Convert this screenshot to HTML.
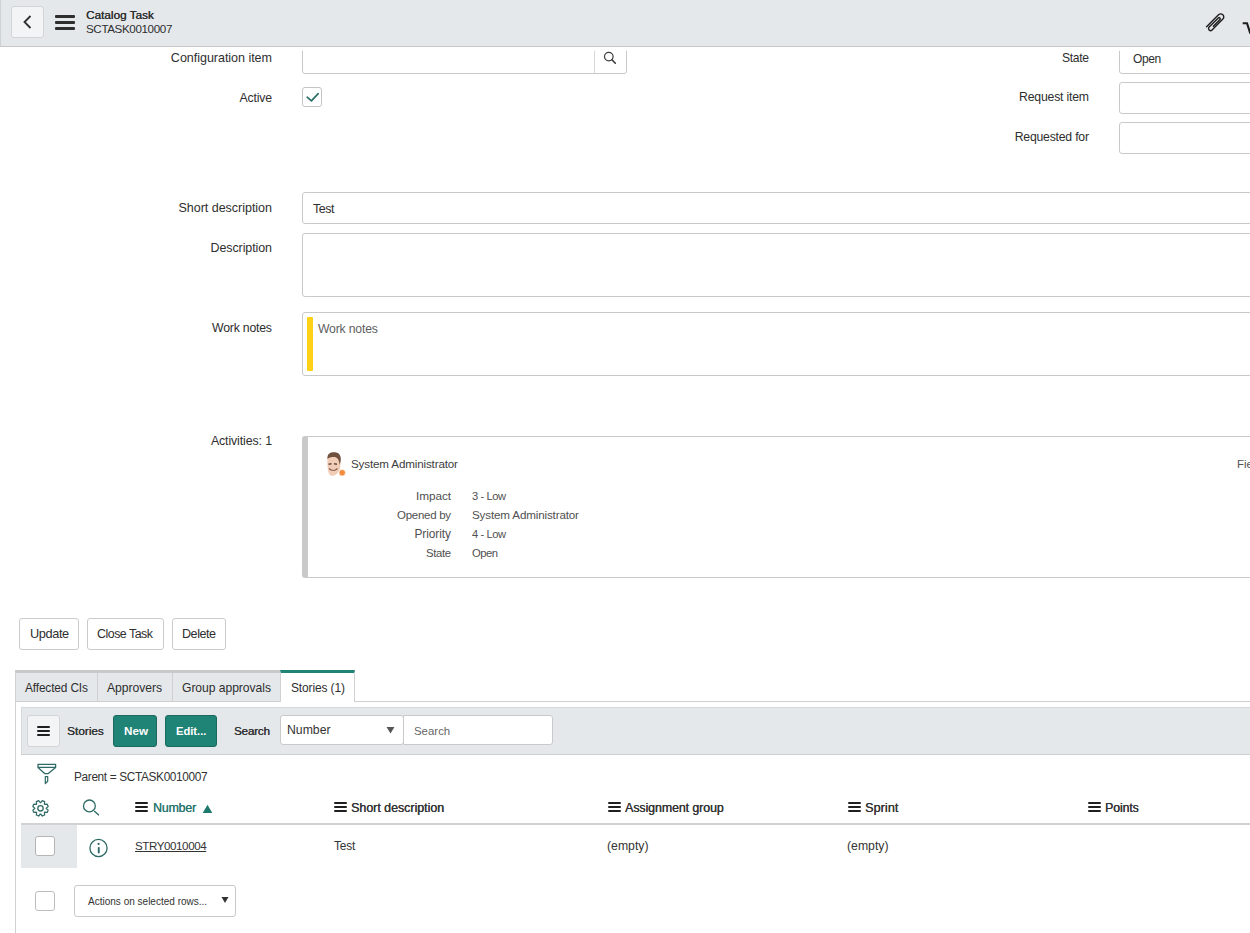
<!DOCTYPE html>
<html><head><meta charset="utf-8">
<style>
*{box-sizing:border-box;margin:0;padding:0}
html,body{width:1250px;height:933px;overflow:hidden;background:#fff;font-family:"Liberation Sans",sans-serif;color:#2e2e2e}
.a{position:absolute}
.t{position:absolute;white-space:nowrap;line-height:1}
.box{position:absolute;border:1px solid #c9c9c9;border-radius:3px;background:#fff}
.bar{position:absolute;background:#1f1f1f}
</style></head><body>
<div class="box" style="left:302px;top:41px;width:325px;height:33px;"></div>
<div class="a" style="left:594px;top:41px;width:1px;height:32px;background:#d6d6d6;"></div>
<svg class="a" style="left:600px;top:48px" width="20" height="20" viewBox="0 0 20 20"><circle cx="8.8" cy="8.6" r="4.3" fill="none" stroke="#3a3a3a" stroke-width="1.2"/><path d="M11.9 11.8 L15.3 15.2" stroke="#3a3a3a" stroke-width="1.6" stroke-linecap="round"/></svg>
<div class="t" style="top:52px;font-size:12.56px;color:#2e2e2e;letter-spacing:-0.04px;right:978.04px;text-align:right;">Configuration item</div>
<div class="box" style="left:302px;top:87px;width:20px;height:20px;border-color:#c4c4c4"></div>
<svg class="a" style="left:302px;top:87px" width="20" height="20" viewBox="0 0 20 20"><path d="M5.2 10.2 L9.4 13.9 L16.2 6.7" fill="none" stroke="#2d6e66" stroke-width="1.7" stroke-linecap="round" stroke-linejoin="round"/></svg>
<div class="t" style="top:92px;font-size:12.27px;color:#2e2e2e;letter-spacing:-0.20px;right:978.20px;text-align:right;">Active</div>
<div class="box" style="left:1119px;top:41px;width:140px;height:33px;"></div>
<div class="t" style="top:53px;font-size:12.01px;color:#2e2e2e;letter-spacing:-0.40px;left:1133px;">Open</div>
<div class="t" style="top:52px;font-size:12.10px;color:#2e2e2e;letter-spacing:-0.31px;right:161.31px;text-align:right;">State</div>
<div class="box" style="left:1119px;top:82px;width:140px;height:32px;"></div>
<div class="t" style="top:91px;font-size:12.26px;color:#2e2e2e;letter-spacing:-0.20px;right:161.20px;text-align:right;">Request item</div>
<div class="box" style="left:1119px;top:122px;width:140px;height:32px;"></div>
<div class="t" style="top:131px;font-size:12.24px;color:#2e2e2e;letter-spacing:-0.21px;right:161.21px;text-align:right;">Requested for</div>
<div class="box" style="left:302px;top:192px;width:960px;height:32px;"></div>
<div class="t" style="top:203px;font-size:12.40px;color:#2e2e2e;left:313px;letter-spacing:-0.4px;">Test</div>
<div class="t" style="top:202px;font-size:12.56px;color:#2e2e2e;letter-spacing:-0.04px;right:978.04px;text-align:right;">Short description</div>
<div class="box" style="left:302px;top:233px;width:960px;height:64px;"></div>
<div class="t" style="top:242px;font-size:12.46px;color:#2e2e2e;letter-spacing:-0.09px;right:978.09px;text-align:right;">Description</div>
<div class="box" style="left:302px;top:312px;width:960px;height:64px;"></div>
<div class="a" style="left:307px;top:317px;width:6px;height:54px;background:#fcd116;border-radius:1px"></div>
<div class="t" style="top:323px;font-size:12.20px;color:#5e5e5e;letter-spacing:-0.17px;left:318px;">Work notes</div>
<div class="t" style="top:322px;font-size:12.27px;color:#2e2e2e;letter-spacing:-0.20px;right:978.20px;text-align:right;">Work notes</div>
<div class="t" style="top:435px;font-size:12.36px;color:#2e2e2e;letter-spacing:-0.12px;right:978.12px;text-align:right;">Activities: 1</div>
<div class="box" style="left:302px;top:436px;width:960px;height:142px;border-left:6px solid #c9c9c9"></div>
<svg class="a" style="left:318px;top:448px" width="32" height="32" viewBox="0 0 32 32">
<path d="M9.5 10 C10 4.5 20 3 22.5 9 L22.5 16 C22.5 24 18 28.2 13.5 27.8 C10 27.3 9 20 9.5 10 Z" fill="#f1cdb8"/>
<path d="M9.5 11 C9 5 13 3.8 17 4.2 C21 4.6 23 7 22.8 12 L21.8 17 C21 11 19 9 16 9 C13 9 11 9.5 9.5 11 Z" fill="#6f503e"/>
<path d="M10.5 16.3 L13.5 15.8 M16 15.8 L19 16.2" stroke="#6a4c3c" stroke-width="1.4"/>
<path d="M11 20.5 C13.5 23 17 23 19.5 20.5" fill="none" stroke="#8e5c50" stroke-width="1.3"/>
<circle cx="24.2" cy="24.7" r="3.2" fill="#f58b3c" stroke="#fff" stroke-width="0.6"/>
</svg>
<div class="t" style="top:458px;font-size:11.64px;color:#3d3d3d;letter-spacing:-0.15px;left:351px;">System Administrator</div>
<div class="t" style="top:459px;font-size:11.50px;color:#555;left:1237px;">Fie</div>
<div class="t" style="top:491px;font-size:11.80px;color:#4f4f4f;letter-spacing:-0.08px;right:799.08px;text-align:right;">Impact</div>
<div class="t" style="top:491px;font-size:11.16px;color:#4f4f4f;letter-spacing:-0.43px;left:472px;">3 - Low</div>
<div class="t" style="top:510px;font-size:11.49px;color:#4f4f4f;letter-spacing:-0.28px;right:799.28px;text-align:right;">Opened by</div>
<div class="t" style="top:509px;font-size:11.64px;color:#4f4f4f;letter-spacing:-0.15px;left:472px;">System Administrator</div>
<div class="t" style="top:529px;font-size:11.85px;color:#4f4f4f;letter-spacing:-0.04px;right:799.04px;text-align:right;">Priority</div>
<div class="t" style="top:529px;font-size:11.16px;color:#4f4f4f;letter-spacing:-0.43px;left:472px;">4 - Low</div>
<div class="t" style="top:548px;font-size:11.33px;color:#4f4f4f;letter-spacing:-0.36px;right:799.36px;text-align:right;">State</div>
<div class="t" style="top:548px;font-size:11.29px;color:#4f4f4f;letter-spacing:-0.54px;left:472px;">Open</div>
<div class="box" style="left:19px;top:618px;width:60px;height:32px;border-color:#cbcbcb"></div>
<div class="t" style="top:628px;font-size:12.75px;color:#2e2e2e;letter-spacing:-0.38px;left:30px;">Update</div>
<div class="box" style="left:87px;top:618px;width:77px;height:32px;border-color:#cbcbcb"></div>
<div class="t" style="top:628px;font-size:12.42px;color:#2e2e2e;letter-spacing:-0.49px;left:97px;">Close Task</div>
<div class="box" style="left:172px;top:618px;width:54px;height:32px;border-color:#cbcbcb"></div>
<div class="t" style="top:628px;font-size:12.55px;color:#2e2e2e;letter-spacing:-0.45px;left:182px;">Delete</div>
<div class="a" style="left:15px;top:670px;width:1px;height:263px;background:#d0d0d0;"></div>
<div class="a" style="left:15px;top:670px;width:266px;height:32px;background:#e4e8eb;border-top:3px solid #c9c9c9;border-bottom:1px solid #cfcfcf;border-left:1px solid #d0d0d0"></div>
<div class="a" style="left:97px;top:673px;width:1px;height:28px;background:#d0d0d0;"></div>
<div class="a" style="left:172px;top:673px;width:1px;height:28px;background:#d0d0d0;"></div>
<div class="a" style="left:280px;top:670px;width:75px;height:32px;background:#fff;border-top:3px solid #1f8476;border-left:1px solid #d0d0d0;border-right:1px solid #d0d0d0"></div>
<div class="a" style="left:354px;top:701px;width:896px;height:1px;background:#cfcfcf;"></div>
<div class="t" style="top:683px;font-size:11.91px;color:#2e2e2e;letter-spacing:-0.15px;left:25px;">Affected CIs</div>
<div class="t" style="top:682px;font-size:12.17px;color:#2e2e2e;letter-spacing:-0.03px;left:107px;">Approvers</div>
<div class="t" style="top:682px;font-size:12.13px;color:#2e2e2e;letter-spacing:-0.05px;left:182px;">Group approvals</div>
<div class="t" style="top:683px;font-size:11.97px;color:#2e2e2e;letter-spacing:-0.12px;left:291px;">Stories (1)</div>
<div class="a" style="left:21px;top:707px;width:1240px;height:48px;background:#e4e8eb;border:1px solid #d6d9dc;border-bottom-color:#cdd0d3"></div>
<div class="box" style="left:27px;top:715px;width:33px;height:32px;background:#f3f4f6;border-color:#d2d4d5"></div>
<div class="a" style="left:37px;top:726px;width:13px;height:2px;background:#1f1f1f;border-radius:1px"></div>
<div class="a" style="left:37px;top:730px;width:13px;height:2px;background:#1f1f1f;border-radius:1px"></div>
<div class="a" style="left:37px;top:734px;width:13px;height:2px;background:#1f1f1f;border-radius:1px"></div>
<div class="t" style="top:726px;font-size:11.80px;color:#333;left:67px;text-shadow:0.3px 0 0 #333;">Stories</div>
<div class="a" style="left:113px;top:715px;width:44px;height:32px;background:#1f8476;border:1px solid #19695e;border-radius:3px"></div>
<div class="t" style="top:725px;font-size:11.67px;color:#fff;left:124px;font-weight:bold;">New</div>
<div class="a" style="left:165px;top:715px;width:52px;height:32px;background:#1f8476;border:1px solid #19695e;border-radius:3px"></div>
<div class="t" style="top:726px;font-size:11.17px;color:#fff;left:176px;font-weight:bold;">Edit...</div>
<div class="t" style="top:726px;font-size:11.57px;color:#333;letter-spacing:-0.15px;left:234px;text-shadow:0.3px 0 0 #333;">Search</div>
<div class="box" style="left:280px;top:715px;width:124px;height:30px;"></div>
<div class="t" style="top:724px;font-size:12.26px;color:#333;left:287px;">Number</div>
<svg class="a" style="left:386px;top:726px" width="9" height="8" viewBox="0 0 9 8"><path d="M0.5 1 L8.5 1 L4.5 7.5 Z" fill="#555"/></svg>
<div class="box" style="left:403px;top:715px;width:150px;height:30px;border-radius:0 3px 3px 0"></div>
<div class="t" style="top:726px;font-size:11.43px;color:#666;left:414px;">Search</div>
<svg class="a" style="left:32px;top:758px" width="30" height="30" viewBox="0 0 30 30">
<path d="M6 6.3 H23.6 V9.5 L16.3 15.6 H12.6 L6 9.5 Z M6 9.4 H23.6" fill="none" stroke="#2f6b66" stroke-width="1.3" stroke-linejoin="round"/>
<path d="M13.3 18.6 H15.7 V23.2 L13.3 25.5 Z" fill="none" stroke="#2f6b66" stroke-width="1.2" stroke-linejoin="round"/>
</svg>
<div class="t" style="top:772px;font-size:11.87px;color:#333;letter-spacing:-0.36px;left:74px;">Parent = SCTASK0010007</div>
<svg class="a" style="left:28px;top:796px" width="26" height="26" viewBox="0 0 26 26"><path d="M12.69 6.60 L14.32 4.61 L16.65 5.58 L16.40 8.14 L16.66 8.40 L19.22 8.15 L20.19 10.48 L18.20 12.11 L18.20 12.49 L20.19 14.12 L19.22 16.45 L16.66 16.20 L16.40 16.46 L16.65 19.02 L14.32 19.99 L12.69 18.00 L12.31 18.00 L10.68 19.99 L8.35 19.02 L8.60 16.46 L8.34 16.20 L5.78 16.45 L4.81 14.12 L6.80 12.49 L6.80 12.11 L4.81 10.48 L5.78 8.15 L8.34 8.40 L8.60 8.14 L8.35 5.58 L10.68 4.61 L12.31 6.60 Z" fill="none" stroke="#2f6b66" stroke-width="1.25" stroke-linejoin="round"/><circle cx="12.5" cy="12.3" r="2.7" fill="none" stroke="#2f6b66" stroke-width="1.3"/></svg>
<svg class="a" style="left:80px;top:796px" width="24" height="24" viewBox="0 0 24 24"><circle cx="9.4" cy="9.9" r="5.9" fill="none" stroke="#2f6b66" stroke-width="1.3"/><path d="M14.2 15 L19 19.2" stroke="#2f6b66" stroke-width="1.4"/></svg>
<div class="a" style="left:135px;top:802px;width:13px;height:2px;background:#1f1f1f;border-radius:1px"></div>
<div class="a" style="left:135px;top:806px;width:13px;height:2px;background:#1f1f1f;border-radius:1px"></div>
<div class="a" style="left:135px;top:810px;width:13px;height:2px;background:#1f1f1f;border-radius:1px"></div>
<div class="t" style="top:802px;font-size:12.30px;color:#2a7670;letter-spacing:-0.15px;left:153px;text-shadow:0.3px 0 0 #2a7670;">Number</div>
<svg class="a" style="left:202px;top:804px" width="12" height="10" viewBox="0 0 12 10"><path d="M0.7 9 L10.3 9 L5.5 0.8 Z" fill="#1f7a6e"/></svg>
<div class="a" style="left:334px;top:802px;width:13px;height:2px;background:#1f1f1f;border-radius:1px"></div>
<div class="a" style="left:334px;top:806px;width:13px;height:2px;background:#1f1f1f;border-radius:1px"></div>
<div class="a" style="left:334px;top:810px;width:13px;height:2px;background:#1f1f1f;border-radius:1px"></div>
<div class="t" style="top:802px;font-size:12.45px;color:#333;letter-spacing:-0.02px;left:351px;text-shadow:0.3px 0 0 #333;">Short description</div>
<div class="a" style="left:608px;top:802px;width:13px;height:2px;background:#1f1f1f;border-radius:1px"></div>
<div class="a" style="left:608px;top:806px;width:13px;height:2px;background:#1f1f1f;border-radius:1px"></div>
<div class="a" style="left:608px;top:810px;width:13px;height:2px;background:#1f1f1f;border-radius:1px"></div>
<div class="t" style="top:802px;font-size:12.37px;color:#333;letter-spacing:-0.07px;left:625px;text-shadow:0.3px 0 0 #333;">Assignment group</div>
<div class="a" style="left:848px;top:802px;width:13px;height:2px;background:#1f1f1f;border-radius:1px"></div>
<div class="a" style="left:848px;top:806px;width:13px;height:2px;background:#1f1f1f;border-radius:1px"></div>
<div class="a" style="left:848px;top:810px;width:13px;height:2px;background:#1f1f1f;border-radius:1px"></div>
<div class="t" style="top:802px;font-size:12.62px;color:#333;letter-spacing:0.06px;left:865px;text-shadow:0.3px 0 0 #333;">Sprint</div>
<div class="a" style="left:1088px;top:802px;width:13px;height:2px;background:#1f1f1f;border-radius:1px"></div>
<div class="a" style="left:1088px;top:806px;width:13px;height:2px;background:#1f1f1f;border-radius:1px"></div>
<div class="a" style="left:1088px;top:810px;width:13px;height:2px;background:#1f1f1f;border-radius:1px"></div>
<div class="t" style="top:802px;font-size:12.31px;color:#333;letter-spacing:-0.10px;left:1105px;text-shadow:0.3px 0 0 #333;">Points</div>
<div class="a" style="left:21px;top:823px;width:1229px;height:2px;background:#d2d2d2;"></div>
<div class="a" style="left:21px;top:825px;width:56px;height:43px;background:#e4e8eb;"></div>
<div class="box" style="left:35px;top:836px;width:20px;height:20px;border-color:#b5b5b5"></div>
<svg class="a" style="left:84px;top:834px" width="28" height="28" viewBox="0 0 28 28"><circle cx="14.5" cy="14" r="8.6" fill="none" stroke="#2f6b66" stroke-width="1.3"/><rect x="13.8" y="12.9" width="1.9" height="6.6" rx="0.9" fill="#2f6b66"/><circle cx="14.6" cy="9.9" r="1.1" fill="#2f6b66"/></svg>
<div class="t" style="top:841px;font-size:11.59px;color:#333;letter-spacing:-0.41px;left:135px;text-decoration:underline;">STRY0010004</div>
<div class="t" style="top:841px;font-size:11.89px;color:#333;letter-spacing:-0.20px;left:334px;">Test</div>
<div class="t" style="top:840px;font-size:12.25px;color:#333;left:607px;">(empty)</div>
<div class="t" style="top:840px;font-size:12.25px;color:#333;left:847px;">(empty)</div>
<div class="box" style="left:35px;top:891px;width:20px;height:20px;border-color:#bdbdbd"></div>
<div class="box" style="left:74px;top:885px;width:162px;height:32px;"></div>
<div class="t" style="top:897px;font-size:10.03px;color:#333;left:88px;">Actions on selected rows...</div>
<svg class="a" style="left:221px;top:896px" width="8" height="8" viewBox="0 0 8 8"><path d="M0.5 1 L7.5 1 L4 7 Z" fill="#333"/></svg>
<div class="a" style="left:0;top:0;width:1250px;height:47px;z-index:5;background:#e4e8eb;border-bottom:1px solid #c5c7c8;border-left:1px solid #cfd1d2">
<div class="box" style="left:10px;top:6px;width:33px;height:32px;background:#f3f4f6;border-color:#d2d4d5"></div>
<svg class="a" style="left:10px;top:6px" width="33" height="32" viewBox="0 0 33 32"><path d="M19.5 10 L13.5 16 L19.5 22" fill="none" stroke="#2e2e2e" stroke-width="1.8"/></svg>
<div class="a" style="left:54px;top:15px;width:20px;height:3px;background:#2e2e2e;border-radius:1px"></div>
<div class="a" style="left:54px;top:21px;width:20px;height:3px;background:#2e2e2e;border-radius:1px"></div>
<div class="a" style="left:54px;top:27px;width:20px;height:3px;background:#2e2e2e;border-radius:1px"></div>
<div class="t" style="top:9px;font-size:11.75px;color:#2e2e2e;left:85px;text-shadow:0.3px 0 0 #2e2e2e;">Catalog Task</div>
<div class="t" style="top:23px;font-size:11.64px;color:#2e2e2e;letter-spacing:-0.38px;left:85px;">SCTASK0010007</div>
<svg class="a" style="left:1203px;top:11px" width="24" height="24" viewBox="0 0 24 24" fill="none" stroke="#1e1e1e" stroke-width="1.6" stroke-linecap="round">
<path transform="translate(0.4 1.1) scale(0.9)" d="M2.40 16.26 L15.70 2.97 A3.4 3.4 0 0 1 20.51 7.78 L8.49 19.80 A2.275 2.275 0 0 1 5.27 16.58 L15.38 6.47 A1.325 1.325 0 0 1 17.25 8.34 L9.97 15.63"/>
</svg>
<svg class="a" style="left:1238px;top:18px" width="14" height="16" viewBox="0 0 14 16"><path d="M3.7 5.2 H8 L10.7 13.6 L13 9" fill="none" stroke="#1e1e1e" stroke-width="2.1"/></svg>
</div>
<div class="a" style="left:0;top:47px;width:1250px;height:4px;z-index:5;background:linear-gradient(#fff,rgba(255,255,255,0.85))"></div>
</body></html>
